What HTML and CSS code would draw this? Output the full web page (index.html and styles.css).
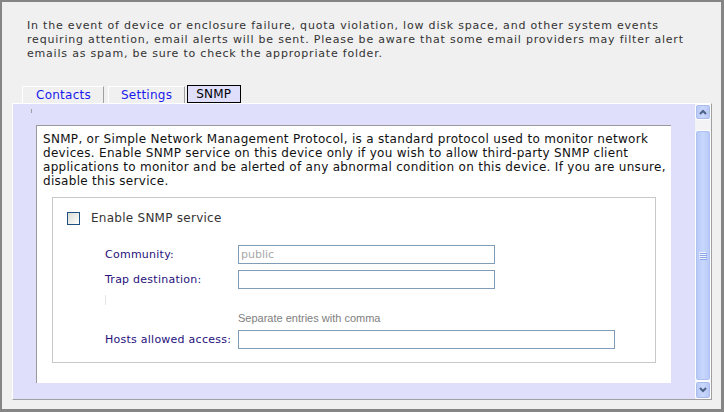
FILE: index.html
```html
<!DOCTYPE html>
<html>
<head>
<meta charset="utf-8">
<link rel="stylesheet" href="styles.css">
</head>
<body>
<div class="window">
  <p class="intro">In the event of device or enclosure failure, quota violation, low disk space, and other system events requiring attention, email alerts will be sent. Please be aware that some email providers may filter alert emails as spam, be sure to check the appropriate folder.</p>
  <div class="tabs">
    <a class="tab tab-contacts">Contacts</a>
    <a class="tab tab-settings">Settings</a>
    <span class="tab tab-active">SNMP</span>
  </div>
  <div class="panel">
    <div class="panel-body">
      <div class="tick"></div>
      <div class="sheet">
        <p class="desc">SNMP, or Simple Network Management Protocol, is a standard protocol used to monitor network devices. Enable SNMP service on this device only if you wish to allow third-party SNMP client applications to monitor and be alerted of any abnormal condition on this device. If you are unsure, disable this service.</p>
        <div class="group">
          <label class="check-row"><input type="checkbox" class="checkbox"><span class="check-label">Enable SNMP service</span></label>
          <div class="row row-first"><span class="lbl">Community:</span><input class="field field-short" type="text" value="public" disabled></div>
          <div class="row row-next"><span class="lbl">Trap destination:</span><input class="field field-short" type="text"></div>
          <div class="tick2"></div>
          <div class="note">Separate entries with comma</div>
          <div class="row row-last"><span class="lbl">Hosts allowed access:</span><input class="field field-long" type="text"></div>
        </div>
      </div>
    </div>
    <div class="scrollbar">
      <div class="sb-btn sb-up"><svg width="8" height="6" viewBox="0 0 8 6"><polyline points="1,5 4,2 7,5" fill="none" stroke="#4d6185" stroke-width="2"/></svg></div>
      <div class="sb-track"></div>
      <div class="sb-thumb"><svg width="8" height="8" viewBox="0 0 8 8"><g stroke="#eef3ff" stroke-width="1"><line x1="0" y1="0.5" x2="7" y2="0.5"/><line x1="0" y1="2.5" x2="7" y2="2.5"/><line x1="0" y1="4.5" x2="7" y2="4.5"/><line x1="0" y1="6.5" x2="7" y2="6.5"/></g><g stroke="#8ca6e6" stroke-width="1"><line x1="1" y1="1.5" x2="8" y2="1.5"/><line x1="1" y1="3.5" x2="8" y2="3.5"/><line x1="1" y1="5.5" x2="8" y2="5.5"/><line x1="1" y1="7.5" x2="8" y2="7.5"/></g></svg></div>
      <div class="sb-btn sb-down"><svg width="8" height="6" viewBox="0 0 8 6"><polyline points="1,1 4,4 7,1" fill="none" stroke="#4d6185" stroke-width="2"/></svg></div>
    </div>
  </div>
</div>
</body>
</html>
```
FILE: styles.css
```css
html, body {
  margin: 0;
  padding: 0;
}
body {
  font-family: "DejaVu Sans", Verdana, sans-serif;
  background: #f0f0f0;
}
.window {
  width: 724px;
  height: 412px;
  box-sizing: border-box;
  border-style: solid;
  border-color: #858585;
  border-width: 2px 3px 3px 2px;
  background: #f0f0f0;
  overflow: hidden;
}
.intro {
  margin: 0;
  padding: 17px 20px 0 25px;
  font-size: 11px;
  line-height: 14px;
  letter-spacing: 0.8px;
  color: #333333;
}
.tabs {
  display: flex;
  align-items: flex-end;
  height: 18px;
  margin: 24px 0 0 20px;
}
.tab {
  box-sizing: border-box;
  height: 17px;
  padding: 0 12px 0 13px;
  border-top: 1px solid #ffffff;
  border-left: 1px solid #ffffff;
  border-right: 1px solid #a0a0a0;
  font-size: 12px;
  line-height: 16px;
  letter-spacing: 0.25px;
  color: #1a1aee;
  text-decoration: none;
}
.tab-settings {
  margin-left: 4px;
  padding: 0 12px 0 12px;
}
.tab-active {
  height: 18px;
  margin-left: 2px;
  padding: 0 9px 0 8px;
  border: 1px solid #000000;
  background: #dfdffb;
  color: #000000;
}
.panel {
  display: flex;
  width: 700px;
  height: 297px;
  margin-left: 10px;
  box-sizing: border-box;
  border-style: solid;
  border-width: 1px;
  border-color: #ffffff #a0a0a0 #a0a0a0 #ffffff;
  background: #dfdffb;
}
.panel-body {
  flex: 1;
  overflow: hidden;
}
.tick {
  width: 1px;
  height: 4px;
  margin: 5px 0 0 18px;
  background: #a0a0a0;
}
.sheet {
  width: 635px;
  height: 258px;
  margin: 12px 0 0 23px;
  box-sizing: border-box;
  padding: 6px 0 0 6px;
  border-top: 1px solid #999999;
  border-left: 1px solid #999999;
  background: #ffffff;
}
.desc {
  margin: 0;
  font-size: 12px;
  line-height: 14px;
  letter-spacing: 0.3px;
  color: #111111;
}
.group {
  width: 604px;
  height: 166px;
  box-sizing: border-box;
  margin: 9px 0 0 9px;
  padding: 14px 0 0 14px;
  border: 1px solid #c8c8c8;
}
.check-row {
  display: flex;
  align-items: center;
  height: 13px;
  gap: 11px;
}
.checkbox {
  appearance: none;
  -webkit-appearance: none;
  margin: 0;
  width: 13px;
  height: 13px;
  box-sizing: border-box;
  border: 1px solid #1c5180;
  background: linear-gradient(135deg, #dcdcd7 0%, #f4f4f0 70%, #ffffff 100%);
}
.check-label {
  font-size: 12px;
  line-height: 13px;
  letter-spacing: 0.26px;
  color: #333333;
}
.row {
  display: flex;
  align-items: center;
  margin-left: 38px;
  height: 19px;
}
.row-first {
  margin-top: 20px;
}
.row-next,
.row-last {
  margin-top: 6px;
}
.lbl {
  width: 133px;
  font-size: 11px;
  letter-spacing: 0.25px;
  color: #26107a;
}
.field {
  box-sizing: border-box;
  height: 19px;
  margin: 0;
  padding: 0 2px;
  border: 1px solid #7f9db9;
  background: #ffffff;
  font-family: "DejaVu Sans", Verdana, sans-serif;
  font-size: 11px;
  color: #000000;
  outline: none;
}
.field:disabled {
  color: #a8a8a8;
  background: #ffffff;
}
.field-short {
  width: 257px;
}
.field-long {
  width: 377px;
}
.tick2 {
  width: 1px;
  height: 10px;
  margin: 6px 0 0 38px;
  background: #e4e4e4;
}
.note {
  margin: 7px 0 0 171px;
  font-family: "Liberation Sans", Arial, sans-serif;
  font-size: 11px;
  line-height: 12px;
  color: #808080;
}
.scrollbar {
  display: flex;
  flex-direction: column;
  width: 16px;
  background: #f3f3f6;
}
.sb-btn {
  display: flex;
  align-items: center;
  justify-content: center;
  box-sizing: border-box;
  border: 1px solid #ffffff;
  border-radius: 3px;
  background: linear-gradient(90deg, #b7c8f6 0%, #c9d7fb 50%, #b4c6f5 100%);
  box-shadow: inset 0 0 0 1px #a9bcec;
}
.sb-up {
  height: 16px;
}
.sb-down {
  height: 18px;
}
.sb-track {
  height: 10px;
}
.sb-thumb {
  flex: 1;
  display: flex;
  align-items: center;
  justify-content: center;
  box-sizing: border-box;
  border: 1px solid #ffffff;
  border-radius: 3px;
  background: linear-gradient(90deg, #b5c8f7 0%, #c8d7fc 50%, #b5c8f7 100%);
  box-shadow: inset 0 0 0 1px #aec1f1;
}
```
